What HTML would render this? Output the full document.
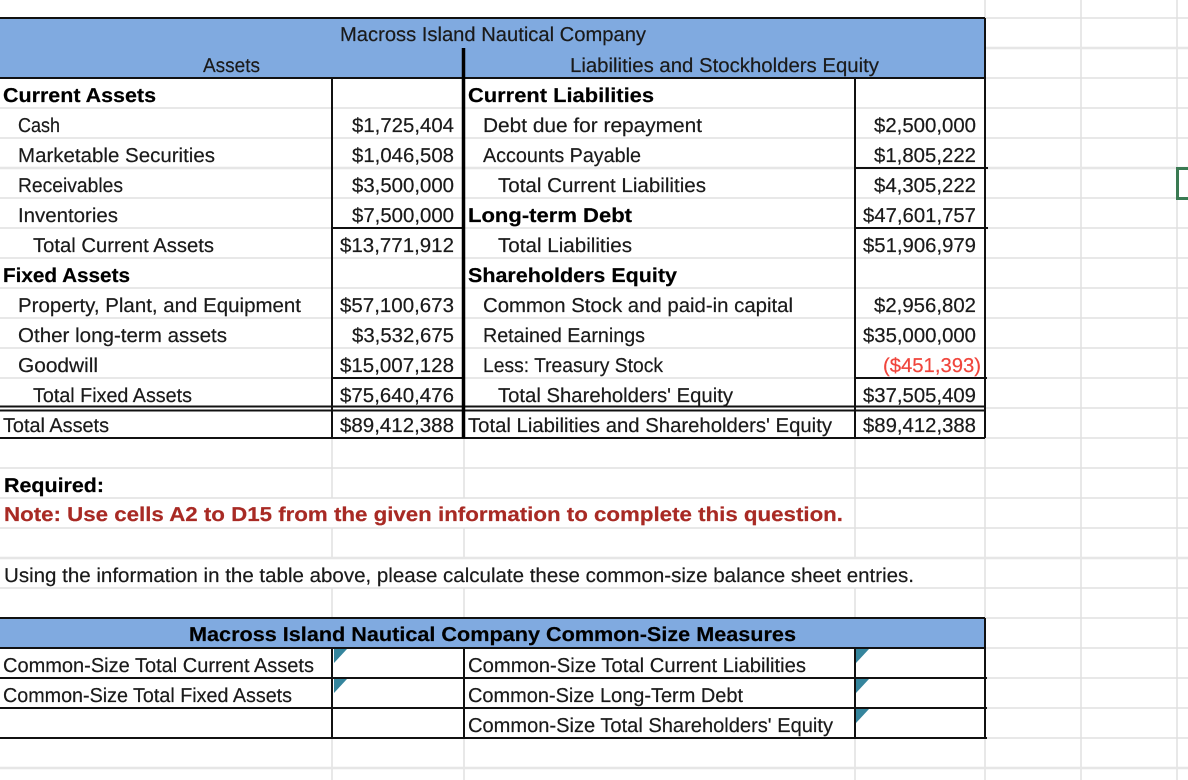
<!DOCTYPE html>
<html lang="en">
<head>
<meta charset="utf-8">
<title>Macross Island Nautical Company</title>
<style>
html,body{margin:0;padding:0;background:#fff;width:1188px;height:780px;overflow:hidden}
svg{display:block}
text{font-family:"Liberation Sans",sans-serif;font-size:20px;fill:#1a1a1a;stroke:#1a1a1a;stroke-width:.2;text-rendering:geometricPrecision}
.b{font-weight:bold;fill:#000;stroke:#000}
.g{stroke:#e0e0e0;stroke-width:1.5;fill:none}
.k{stroke:#111;stroke-width:2;fill:none}
</style>
</head>
<body>
<svg width="1188" height="780" viewBox="0 0 1188 780" xmlns="http://www.w3.org/2000/svg">
<rect width="1188" height="780" fill="#fff"/>

<!-- grid horizontals -->
<path class="g" d="M985 18H1188M985 48H1188M985 78H1188M0 108H1188M0 138H1188M0 168H1188M0 198H1188M0 228H1188M0 258H1188M0 288H1188M0 318H1188M0 348H1188M0 378H1188M985 408H1188M985 438H1188M0 468H1188M0 498H1188M0 528H1188M0 558H1188M0 588H1188M985 618H1188M985 648H1188M985 678H1188M985 708H1188M985 738H1188M0 768H1188"/>
<!-- grid verticals -->
<path class="g" d="M985 0V780M1081 0V780M1177 0V780M332 438V498M464 438V498M332 528V558M464 528V558M332 588V618M464 588V618M332 738V780M464 738V780M855 438V558M855 588V618M855 738V780"/>
<path d="M985 48H1188M0 168H1188M0 558H1188M0 768H1188" stroke="#e6e6e6" stroke-width="2.5" fill="none"/>

<!-- header fills -->
<rect x="0" y="18" width="985" height="60" fill="#80aae0"/>
<rect x="0" y="618" width="985" height="30" fill="#80aae0"/>

<!-- top table borders -->
<path class="k" d="M0 18H985M0 78H985M985 18V438M332 78V438M855 78V438M0 406.500H985M0 410.500H985M0 438H985"/>
<path class="k" d="M332 228H464M332 378H464M855 168H988M855 228H988M855 378H987"/>
<path d="M463.500 48V438" stroke="#000" stroke-width="3.500" fill="none"/>

<!-- bottom table borders -->
<path class="k" d="M0 618H985M0 648H985M0 678H987M0 708H987M0 738H987M985 618V738M332 648V738M464 648V738M855 648V738"/>

<!-- comment triangles -->
<g fill="#35859d">
<path d="M334 649H347L334 663Z"/>
<path d="M334 679H347L334 693Z"/>
<path d="M856 649H869L856 663Z"/>
<path d="M856 679H869L856 693Z"/>
<path d="M856 709H869L856 723Z"/>
</g>

<!-- selected cell -->
<path d="M1188 168.500H1177.500V198.500H1188" stroke="#3a7a52" stroke-width="3" fill="none"/>

<!-- header text -->
<text x="340" y="41" textLength="306" lengthAdjust="spacingAndGlyphs">Macross Island Nautical Company</text>
<text x="203" y="72" textLength="57" lengthAdjust="spacingAndGlyphs">Assets</text>
<text x="570" y="72" textLength="309" lengthAdjust="spacingAndGlyphs">Liabilities and Stockholders Equity</text>

<!-- column A -->
<text class="b" x="3" y="102" textLength="153" lengthAdjust="spacingAndGlyphs">Current Assets</text>
<text x="18" y="132" textLength="42" lengthAdjust="spacingAndGlyphs">Cash</text>
<text x="18" y="162" textLength="197" lengthAdjust="spacingAndGlyphs">Marketable Securities</text>
<text x="18" y="192" textLength="105" lengthAdjust="spacingAndGlyphs">Receivables</text>
<text x="18" y="222" textLength="100" lengthAdjust="spacingAndGlyphs">Inventories</text>
<text x="33" y="252" textLength="181" lengthAdjust="spacingAndGlyphs">Total Current Assets</text>
<text class="b" x="3" y="282" textLength="127" lengthAdjust="spacingAndGlyphs">Fixed Assets</text>
<text x="18" y="312" textLength="283" lengthAdjust="spacingAndGlyphs">Property, Plant, and Equipment</text>
<text x="18" y="342" textLength="209" lengthAdjust="spacingAndGlyphs">Other long-term assets</text>
<text x="18" y="372" textLength="80" lengthAdjust="spacingAndGlyphs">Goodwill</text>
<text x="33" y="402" textLength="159" lengthAdjust="spacingAndGlyphs">Total Fixed Assets</text>
<text x="3" y="432" textLength="106" lengthAdjust="spacingAndGlyphs">Total Assets</text>

<!-- column B -->
<text x="352" y="132" textLength="102" lengthAdjust="spacingAndGlyphs">$1,725,404</text>
<text x="352" y="162" textLength="102" lengthAdjust="spacingAndGlyphs">$1,046,508</text>
<text x="352" y="192" textLength="102" lengthAdjust="spacingAndGlyphs">$3,500,000</text>
<text x="352" y="222" textLength="102" lengthAdjust="spacingAndGlyphs">$7,500,000</text>
<text x="340" y="252" textLength="114" lengthAdjust="spacingAndGlyphs">$13,771,912</text>
<text x="340" y="312" textLength="114" lengthAdjust="spacingAndGlyphs">$57,100,673</text>
<text x="352" y="342" textLength="102" lengthAdjust="spacingAndGlyphs">$3,532,675</text>
<text x="340" y="372" textLength="114" lengthAdjust="spacingAndGlyphs">$15,007,128</text>
<text x="340" y="402" textLength="114" lengthAdjust="spacingAndGlyphs">$75,640,476</text>
<text x="340" y="432" textLength="114" lengthAdjust="spacingAndGlyphs">$89,412,388</text>

<!-- column C -->
<text class="b" x="468" y="102" textLength="186" lengthAdjust="spacingAndGlyphs">Current Liabilities</text>
<text x="483" y="132" textLength="219" lengthAdjust="spacingAndGlyphs">Debt due for repayment</text>
<text x="483" y="162" textLength="158" lengthAdjust="spacingAndGlyphs">Accounts Payable</text>
<text x="498" y="192" textLength="208" lengthAdjust="spacingAndGlyphs">Total Current Liabilities</text>
<text class="b" x="468" y="222" textLength="164" lengthAdjust="spacingAndGlyphs">Long-term Debt</text>
<text x="498" y="252" textLength="134" lengthAdjust="spacingAndGlyphs">Total Liabilities</text>
<text class="b" x="468" y="282" textLength="209" lengthAdjust="spacingAndGlyphs">Shareholders Equity</text>
<text x="483" y="312" textLength="310" lengthAdjust="spacingAndGlyphs">Common Stock and paid-in capital</text>
<text x="483" y="342" textLength="162" lengthAdjust="spacingAndGlyphs">Retained Earnings</text>
<text x="483" y="372" textLength="180" lengthAdjust="spacingAndGlyphs">Less: Treasury Stock</text>
<text x="498" y="402" textLength="235" lengthAdjust="spacingAndGlyphs">Total Shareholders' Equity</text>
<text x="468" y="432" textLength="364" lengthAdjust="spacingAndGlyphs">Total Liabilities and Shareholders' Equity</text>

<!-- column D -->
<text x="874" y="132" textLength="102" lengthAdjust="spacingAndGlyphs">$2,500,000</text>
<text x="874" y="162" textLength="102" lengthAdjust="spacingAndGlyphs">$1,805,222</text>
<text x="874" y="192" textLength="102" lengthAdjust="spacingAndGlyphs">$4,305,222</text>
<text x="863" y="222" textLength="113" lengthAdjust="spacingAndGlyphs">$47,601,757</text>
<text x="863" y="252" textLength="113" lengthAdjust="spacingAndGlyphs">$51,906,979</text>
<text x="874" y="312" textLength="102" lengthAdjust="spacingAndGlyphs">$2,956,802</text>
<text x="863" y="342" textLength="113" lengthAdjust="spacingAndGlyphs">$35,000,000</text>
<text x="883" y="372" textLength="98" lengthAdjust="spacingAndGlyphs" style="fill:#f0453c;stroke:#f0453c">($451,393)</text>
<text x="863" y="402" textLength="113" lengthAdjust="spacingAndGlyphs">$37,505,409</text>
<text x="863" y="432" textLength="113" lengthAdjust="spacingAndGlyphs">$89,412,388</text>

<!-- instructions -->
<text class="b" x="4" y="492" textLength="100" lengthAdjust="spacingAndGlyphs">Required:</text>
<text class="b" x="4" y="521" textLength="839" lengthAdjust="spacingAndGlyphs" style="fill:#a82a24;stroke:#a82a24">Note: Use cells A2 to D15 from the given information to complete this question.</text>
<text x="4" y="582" textLength="910" lengthAdjust="spacingAndGlyphs">Using the information in the table above, please calculate these common-size balance sheet entries.</text>

<!-- bottom table text -->
<text class="b" x="189" y="641" textLength="607" lengthAdjust="spacingAndGlyphs">Macross Island Nautical Company Common-Size Measures</text>
<text x="3" y="672" textLength="311" lengthAdjust="spacingAndGlyphs">Common-Size Total Current Assets</text>
<text x="3" y="702" textLength="289" lengthAdjust="spacingAndGlyphs">Common-Size Total Fixed Assets</text>
<text x="468" y="672" textLength="338" lengthAdjust="spacingAndGlyphs">Common-Size Total Current Liabilities</text>
<text x="468" y="702" textLength="275" lengthAdjust="spacingAndGlyphs">Common-Size Long-Term Debt</text>
<text x="468" y="732" textLength="365" lengthAdjust="spacingAndGlyphs">Common-Size Total Shareholders' Equity</text>
</svg>
</body>
</html>
